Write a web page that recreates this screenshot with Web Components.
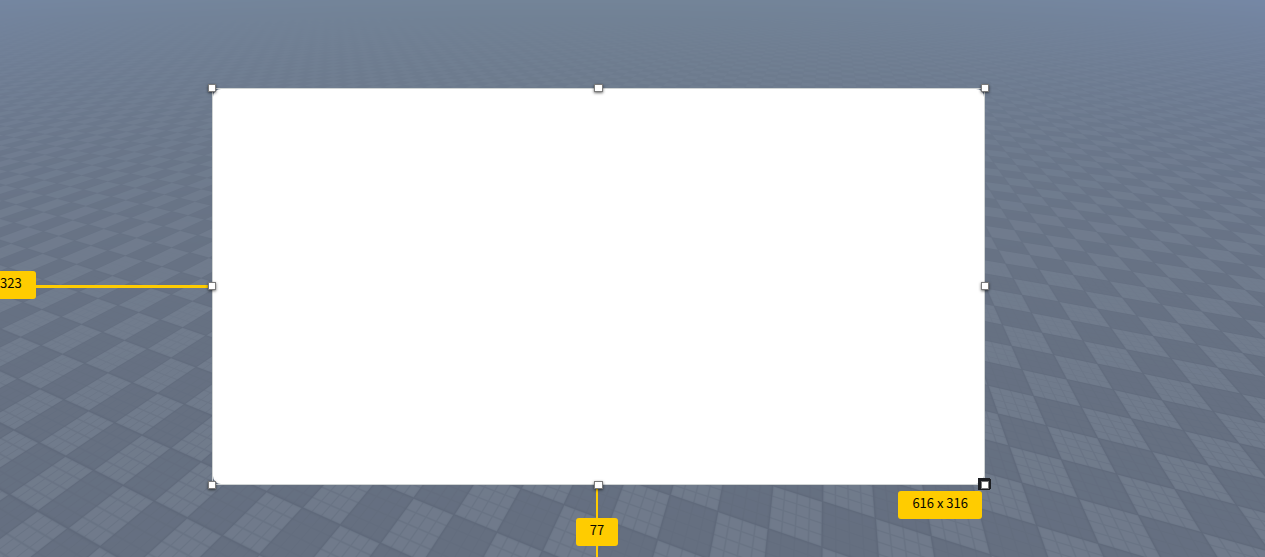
<!DOCTYPE html>
<html lang="en">
<head>
<meta charset="utf-8">
<meta name="viewport" content="width=device-width, initial-scale=1">
<title>Viewport</title>
<style>
html, body { height: 100%; margin: 0; }
body { font: 13px/24px "Noto Sans CJK SC", "Noto Sans", sans-serif; color: #0a0800; background: #687588; overflow: hidden; }
</style>
</head>
<body>
<scene-viewport>
  <measure-guide slot="left" direction="row">323</measure-guide>
  <selection-frame slot="selection"></selection-frame>
  <measure-guide slot="bottom" direction="column">77</measure-guide>
  <measure-badge slot="size">616 x 316</measure-badge>
</scene-viewport>
<script>
/* Checkered ground plane seen in perspective, fading into haze. */
class SceneFloor extends HTMLElement {
  constructor() {
    super();
    this.attachShadow({ mode: 'open' }).innerHTML = `
      <style>
        :host { display: block; background: #687588; }
        canvas { display: block; width: 100%; height: 100%; }
      </style>
      <canvas aria-hidden="true"></canvas>`;
  }
  connectedCallback() {
    this.draw();
    window.addEventListener('resize', () => this.draw());
  }
  draw() {
    const canvas = this.shadowRoot.querySelector('canvas');
    const w = canvas.width = Math.max(1, this.clientWidth);
    const h = canvas.height = Math.max(1, this.clientHeight);
    const ctx = canvas.getContext('2d');
    const img = ctx.createImageData(w, h);
    const data = img.data;
    const SUB = 3;
    /* Strength of a soft line of half width r around whole numbers of t, blurred by f. */
    const line = (t, r, f) => {
      const d = Math.abs(t - Math.round(t));
      const s = r + f;
      return d < s ? (1 - d / s) * Math.min(1, r / f) : 0;
    };
    for (let py = 0; py < h; py++) {
      const yy = (py + 0.5) / h;
      const haze = Math.exp(-yy * 4.2);
      const contrast = 11 * Math.pow(Math.min(1, Math.max(0, (yy - 0.03) / 0.55)), 0.75);
      const fine = Math.min(1, Math.max(0, (yy - 0.42) / 0.35));
      const seam = Math.min(1, Math.max(0, (yy - 0.15) * 2));
      /* Tile edges soften with distance. */
      const soft = 0.03 + 0.05 * Math.max(0, 1 - yy / 0.6);
      for (let px = 0; px < w; px++) {
        let light = 0;
        for (let j = 0; j < SUB; j++) {
          const y = (py + (j + 0.5) / SUB) / h * 1.114 - 1;
          for (let i = 0; i < SUB; i++) {
            const x = (px + (i + 0.5) / SUB) / w * 2.53 - 1.97;
            const k = -0.000264 * x + 0.882304 * y + 1;
            const u = (-3.757678 * x + 14.46235 * y + 1.743874) / k;
            const v = (9.749252 * x - 3.386903 * y - 0.834487) / k;
            const on = ((Math.floor(u) + Math.floor(v)) & 1) === 0;
            if (on) {
              const du = Math.abs(u - Math.round(u));
              const dv = Math.abs(v - Math.round(v));
              light += contrast * Math.min(1, (Math.min(du, dv) + 0.01) / soft);
            }
            if (seam > 0) {
              light -= 4 * seam * Math.max(line(u, 0.035, 0.02), line(v, 0.035, 0.02));
            }
            if (fine > 0) {
              light -= (on ? 9 : 3) * fine * Math.max(line(u * 4, 0.05, 0.05), line(v * 4, 0.05, 0.05));
            }
          }
        }
        light /= SUB * SUB;
        const side = Math.abs(px / w - 0.45) * 2;
        const sky = haze * side * side;
        const o = (py * w + px) * 4;
        data[o] = 101 + 14 * haze + light * 0.95 + 2 * sky;
        data[o + 1] = 111 + 21 * haze + light + 3 * sky;
        data[o + 2] = 128 + 24 * haze + light * 0.95 + 11 * sky;
        data[o + 3] = 255;
      }
    }
    ctx.putImageData(img, 0, 0);
  }
}
customElements.define('scene-floor', SceneFloor);

/* Yellow label that carries one measurement. */
class MeasureBadge extends HTMLElement {
  constructor() {
    super();
    this.attachShadow({ mode: 'open' }).innerHTML = `
      <style>
        :host { display: block; flex: none; }
        output { display: block; padding: 0 14px 4px; border-radius: 3px; background: #ffcc00; white-space: nowrap; }
      </style>
      <output><slot></slot></output>`;
  }
}
customElements.define('measure-badge', MeasureBadge);

/* Distance from the selection to an edge: a badge with its guide line. */
class MeasureGuide extends HTMLElement {
  constructor() {
    super();
    this.attachShadow({ mode: 'open' }).innerHTML = `
      <style>
        :host { display: flex; align-items: center; height: 100%; }
        :host([direction="column"]) { flex-direction: column; }
        i { background: #ffcc00; }
        :host([direction="row"]) i { flex: 1; height: 3px; }
        :host([direction="row"]) .after { display: none; }
        :host([direction="row"]) measure-badge { order: -1; margin: 0 0 3px -14px; }
        :host([direction="column"]) i { width: 2px; flex: 3; }
        :host([direction="column"]) .after { flex: 1; }
      </style>
      <i></i><measure-badge><slot></slot></measure-badge><i class="after"></i>`;
  }
}
customElements.define('measure-guide', MeasureGuide);

/* Square grip on the selection outline. */
class ResizeHandle extends HTMLElement {
  constructor() {
    super();
    this.attachShadow({ mode: 'open' }).innerHTML = `
      <style>
        :host { display: block; width: 8px; height: 8px; }
        :host([wide]) { width: 9px; }
        button { display: block; box-sizing: border-box; width: 100%; height: 100%; padding: 0;
          border: 1px solid #7a7a7a; border-radius: 0; background: #fff; box-shadow: 0 1px 3px rgba(0,0,0,.6); }
        :host([active]) button { box-shadow: 1px -1px 0 1px #1c1e22, -1px -1px 0 2px #1c1e22; }
      </style>
      <button type="button"></button>`;
  }
  connectedCallback() {
    this.shadowRoot.querySelector('button').setAttribute('aria-label', 'Resize ' + this.getAttribute('label'));
  }
}
customElements.define('resize-handle', ResizeHandle);

/* Selected white frame with its eight grips. */
class SelectionFrame extends HTMLElement {
  constructor() {
    super();
    this.attachShadow({ mode: 'open' }).innerHTML = `
      <style>
        :host { display: block; position: relative; height: 100%; }
        .outline { box-sizing: border-box; height: 100%; border: 1px solid #cfd3d3; background: #6a7689; }
        .fill { height: 100%; border-radius: 8px; background: #fff; }
        resize-handle { position: absolute; margin: -4px 0 0 -4px; }
        resize-handle[wide] { margin-left: -5px; }
        .n { top: 0; } .m { top: calc(50% - 1px); } .s { top: 100%; }
        .w { left: 0; } .c { left: 50%; } .e { left: 100%; }
      </style>
      <div class="outline"><div class="fill"></div></div>
      <resize-handle class="n w" label="top left"></resize-handle>
      <resize-handle class="n c" label="top" wide></resize-handle>
      <resize-handle class="n e" label="top right"></resize-handle>
      <resize-handle class="m w" label="left"></resize-handle>
      <resize-handle class="m e" label="right"></resize-handle>
      <resize-handle class="s w" label="bottom left"></resize-handle>
      <resize-handle class="s c" label="bottom" wide></resize-handle>
      <resize-handle class="s e" label="bottom right" active></resize-handle>`;
  }
}
customElements.define('selection-frame', SelectionFrame);

/* The 3D view: floor behind, selection and its measurements on top. */
class SceneViewport extends HTMLElement {
  constructor() {
    super();
    this.attachShadow({ mode: 'open' }).innerHTML = `
      <style>
        :host { display: grid; height: 100vh; overflow: hidden;
          grid-template: 88px minmax(0, 1fr) 72px / 212px minmax(0, 1fr) 280px; }
        scene-floor { grid-area: 1 / 1 / -1 / -1; min-width: 0; min-height: 0; }
        .left { grid-area: 2 / 1; z-index: 1; }
        .selection { grid-area: 2 / 2; z-index: 2; }
        .bottom { grid-area: 3 / 2; z-index: 1; padding-right: 3px; }
        .size { grid-area: 3 / 2; z-index: 1; justify-self: end; padding: 6px 3px 0 0; }
      </style>
      <scene-floor></scene-floor>
      <div class="left"><slot name="left"></slot></div>
      <div class="selection"><slot name="selection"></slot></div>
      <div class="bottom"><slot name="bottom"></slot></div>
      <div class="size"><slot name="size"></slot></div>`;
  }
}
customElements.define('scene-viewport', SceneViewport);
</script>
</body>
</html>
